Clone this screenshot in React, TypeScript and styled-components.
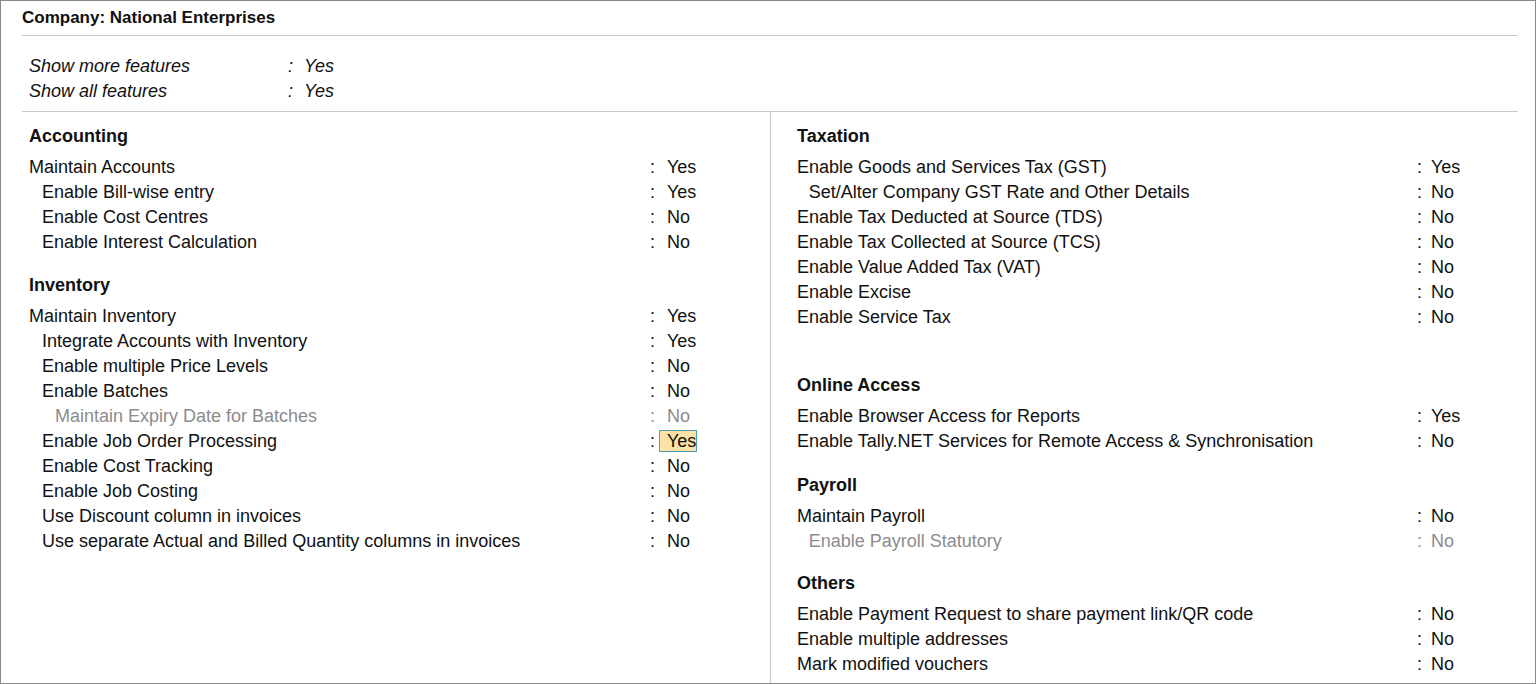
import styled, { createGlobalStyle } from "styled-components";

const Global = createGlobalStyle`
  body { margin: 0; background: #fff; }
  * { box-sizing: border-box; }
`;

const Page = styled.div`
  width: 1536px;
  height: 684px;
  border: 1px solid #8a8a8a;
  font-family: Arial, "Liberation Sans", sans-serif;
  color: #111;
  display: flex;
  flex-direction: column;
  overflow: hidden;
`;

const Title = styled.div`
  margin: 0 17px 0 21px;
  height: 35px;
  padding-top: 7px;
  font-size: 17px;
  font-weight: bold;
  border-bottom: 1px solid #c8c8c8;
`;

const Features = styled.div`
  margin: 0 17px 0 21px;
  padding: 18px 0 7px 7px;
  border-bottom: 1px solid #c8c8c8;
  font-style: italic;
  font-size: 18px;
`;

const FeatureRow = styled.div`
  display: grid;
  grid-template-columns: 259px 16px 60px;
  height: 25px;
  line-height: 25px;
`;

const Columns = styled.div`
  flex: 1;
  display: grid;
  grid-template-columns: 769px 1fr;
`;

const Column = styled.div<{ $right?: boolean }>`
  padding: 12px ${(p) => (p.$right ? "18px" : "20px")} 0
    ${(p) => (p.$right ? "26px" : "28px")};
  border-left: ${(p) => (p.$right ? "1px solid #c8c8c8" : "none")};
`;

const Heading = styled.div<{ $gap: number }>`
  margin-top: ${(p) => p.$gap}px;
  height: 31px;
  line-height: 25px;
  font-size: 18px;
  font-weight: bold;
`;

const Row = styled.div<{ $cols: string; $dim?: boolean }>`
  display: grid;
  grid-template-columns: ${(p) => p.$cols};
  height: 25px;
  line-height: 25px;
  font-size: 18px;
  color: ${(p) => (p.$dim ? "#8c8c8c" : "#111")};
`;

const Label = styled.span<{ $level: number }>`
  padding-left: ${(p) => p.$level * 13}px;
  white-space: nowrap;
`;

const Value = styled.span<{ $active?: boolean }>`
  margin-left: -7px;
  padding-left: 7px;
  border: 1px solid ${(p) => (p.$active ? "#4a9db3" : "transparent")};
  background: ${(p) => (p.$active ? "#fde2a6" : "transparent")};
  line-height: 23px;
`;

type Item = [string, string, number, boolean?, boolean?];
type Section = { title: string; gap: number; items: Item[] };

const left: Section[] = [
  {
    title: "Accounting",
    gap: 0,
    items: [
      ["Maintain Accounts", "Yes", 0],
      ["Enable Bill-wise entry", "Yes", 1],
      ["Enable Cost Centres", "No", 1],
      ["Enable Interest Calculation", "No", 1],
    ],
  },
  {
    title: "Inventory",
    gap: 18,
    items: [
      ["Maintain Inventory", "Yes", 0],
      ["Integrate Accounts with Inventory", "Yes", 1],
      ["Enable multiple Price Levels", "No", 1],
      ["Enable Batches", "No", 1],
      ["Maintain Expiry Date for Batches", "No", 2, true],
      ["Enable Job Order Processing", "Yes", 1, false, true],
      ["Enable Cost Tracking", "No", 1],
      ["Enable Job Costing", "No", 1],
      ["Use Discount column in invoices", "No", 1],
      ["Use separate Actual and Billed Quantity columns in invoices", "No", 1],
    ],
  },
];

const right: Section[] = [
  {
    title: "Taxation",
    gap: 0,
    items: [
      ["Enable Goods and Services Tax (GST)", "Yes", 0],
      ["Set/Alter Company GST Rate and Other Details", "No", 0.9],
      ["Enable Tax Deducted at Source (TDS)", "No", 0],
      ["Enable Tax Collected at Source (TCS)", "No", 0],
      ["Enable Value Added Tax (VAT)", "No", 0],
      ["Enable Excise", "No", 0],
      ["Enable Service Tax", "No", 0],
    ],
  },
  {
    title: "Online Access",
    gap: 43,
    items: [
      ["Enable Browser Access for Reports", "Yes", 0],
      ["Enable Tally.NET Services for Remote Access & Synchronisation", "No", 0],
    ],
  },
  {
    title: "Payroll",
    gap: 19,
    items: [
      ["Maintain Payroll", "No", 0],
      ["Enable Payroll Statutory", "No", 0.9, true],
    ],
  },
  {
    title: "Others",
    gap: 17,
    items: [
      ["Enable Payment Request to share payment link/QR code", "No", 0],
      ["Enable multiple addresses", "No", 0],
      ["Mark modified vouchers", "No", 0],
    ],
  },
];

function Sections({ data, cols }: { data: Section[]; cols: string }) {
  return (
    <>
      {data.map((s) => (
        <div key={s.title}>
          <Heading $gap={s.gap}>{s.title}</Heading>
          {s.items.map(([label, value, level, dim, active]) => (
            <Row key={label} $cols={cols} $dim={dim}>
              <Label $level={level}>{label}</Label>
              <span>:</span>
              <span>
                <Value $active={active}>{value}</Value>
              </span>
            </Row>
          ))}
        </div>
      ))}
    </>
  );
}

export default function App() {
  return (
    <Page>
      <Global />
      <Title>Company: National Enterprises</Title>
      <Features>
        <FeatureRow>
          <span>Show more features</span>
          <span>:</span>
          <span>Yes</span>
        </FeatureRow>
        <FeatureRow>
          <span>Show all features</span>
          <span>:</span>
          <span>Yes</span>
        </FeatureRow>
      </Features>
      <Columns>
        <Column>
          <Sections data={left} cols="621px 16px 84px" />
        </Column>
        <Column $right>
          <Sections data={right} cols="620px 13px 88px" />
        </Column>
      </Columns>
    </Page>
  );
}
